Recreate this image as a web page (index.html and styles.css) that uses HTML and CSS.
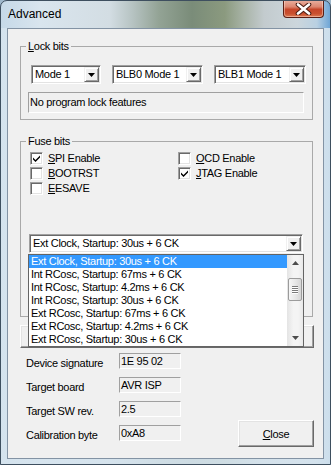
FILE: index.html
```html
<!DOCTYPE html>
<html>
<head>
<meta charset="utf-8">
<link rel="stylesheet" href="styles.css">
</head>
<body>
<div class="window">
  <div class="titlebar">
    <span class="title">Advanced</span>
    <div class="close-x">
      <svg width="17" height="12" viewBox="0 0 17 12">
        <path d="M3 1.5 L14 10.5 M14 1.5 L3 10.5" stroke="#4a1c12" stroke-width="4.6" stroke-linecap="round" fill="none"/>
        <path d="M3 1.5 L14 10.5 M14 1.5 L3 10.5" stroke="#ffffff" stroke-width="2.6" stroke-linecap="round" fill="none"/>
      </svg>
    </div>
  </div>
  <div class="client">
    <fieldset class="group lock">
      <legend><u>L</u>ock bits</legend>
      <div class="combo-row">
        <div class="combo c1"><span class="combo-text">Mode 1</span><span class="combo-btn"><svg width="7" height="4" viewBox="0 0 7 4"><path d="M0 0H7L3.5 4Z" fill="#000"/></svg></span></div>
        <div class="combo c2"><span class="combo-text">BLB0 Mode 1</span><span class="combo-btn"><svg width="7" height="4" viewBox="0 0 7 4"><path d="M0 0H7L3.5 4Z" fill="#000"/></svg></span></div>
        <div class="combo c3"><span class="combo-text">BLB1 Mode 1</span><span class="combo-btn"><svg width="7" height="4" viewBox="0 0 7 4"><path d="M0 0H7L3.5 4Z" fill="#000"/></svg></span></div>
      </div>
      <div class="status">No program lock features</div>
    </fieldset>

    <fieldset class="group fuse">
      <legend>Fuse bits</legend>
      <div class="checks">
        <div class="chk"><span class="box"><svg width="7" height="7" viewBox="0 0 7 7"><path d="M0 2.5L2.5 5L7 0.5V2.5L2.5 7L0 4.5Z" fill="#000"/></svg></span><span><u>S</u>PI Enable</span></div>
        <div class="chk"><span class="box"></span><span><u>O</u>CD Enable</span></div>
        <div class="chk"><span class="box"></span><span><u>B</u>OOTRST</span></div>
        <div class="chk"><span class="box"><svg width="7" height="7" viewBox="0 0 7 7"><path d="M0 2.5L2.5 5L7 0.5V2.5L2.5 7L0 4.5Z" fill="#000"/></svg></span><span><u>J</u>TAG Enable</span></div>
        <div class="chk"><span class="box"></span><span><u>E</u>ESAVE</span></div>
      </div>
      <div class="combo-wrap">
        <div class="combo wide"><span class="combo-text">Ext Clock, Startup: 30us + 6 CK</span><span class="combo-btn"><svg width="7" height="4" viewBox="0 0 7 4"><path d="M0 0H7L3.5 4Z" fill="#000"/></svg></span></div>
        <div class="droplist">
          <div class="items">
            <div class="item sel">Ext Clock, Startup: 30us + 6 CK</div>
            <div class="item">Int RCosc, Startup: 67ms + 6 CK</div>
            <div class="item">Int RCosc, Startup: 4.2ms + 6 CK</div>
            <div class="item">Int RCosc, Startup: 30us + 6 CK</div>
            <div class="item">Ext RCosc, Startup: 67ms + 6 CK</div>
            <div class="item">Ext RCosc, Startup: 4.2ms + 6 CK</div>
            <div class="item">Ext RCosc, Startup: 30us + 6 CK</div>
          </div>
          <div class="scrollbar">
            <div class="sb-arrow"><svg width="7" height="4" viewBox="0 0 7 4"><path d="M0 4H7L3.5 0Z" fill="#4d4d4d"/></svg></div>
            <div class="sb-track-top"></div>
            <div class="sb-thumb"><span></span><span></span><span></span><span></span></div>
            <div class="sb-track"></div>
            <div class="sb-arrow"><svg width="7" height="4" viewBox="0 0 7 4"><path d="M0 0H7L3.5 4Z" fill="#4d4d4d"/></svg></div>
          </div>
        </div>
      </div>
    </fieldset>

    <div class="btn hidden-btn"></div>

    <div class="info">
      <div class="info-grid">
        <span class="lbl">Device signature</span><span class="field">1E 95 02</span>
        <span class="lbl">Target board</span><span class="field">AVR ISP</span>
        <span class="lbl">Target SW rev.</span><span class="field">2.5</span>
        <span class="lbl">Calibration byte</span><span class="field">0xA8</span>
      </div>
      <div class="btn close-btn"><span><u>C</u>lose</span></div>
    </div>
  </div>
</div>
</body>
</html>
```

FILE: styles.css
```css
html, body {
  margin: 0;
  padding: 0;
  background: #9fb8cc;
}

body {
  font-family: "Liberation Sans", Arial, sans-serif;
  font-size: 11px;
  letter-spacing: -0.3px;
  color: #000;
}

.window {
  width: 331px;
  height: 465px;
  box-sizing: border-box;
  border: 1px solid #3e4f5f;
  border-radius: 7px 7px 0 0;
  overflow: hidden;
  background:
    linear-gradient(to bottom, rgba(255,255,255,0) 0, rgba(255,255,255,0) 27px, rgba(214,228,238,0.9) 27px),
    linear-gradient(to right, #c6d9e8 0%, #d9e5ee 12%, #d3dde3 33%, #b6c3c2 40%, #93a395 48%, #7a8c79 58%, #8b9a7f 68%, #a9b4a8 74%, #c3cbce 80%, #ccd6dc 90%, #b9d0e2 96%, #6fa6d6 100%);
  display: flex;
  flex-direction: column;
}

.titlebar {
  height: 27px;
  flex: none;
  display: flex;
  justify-content: space-between;
  align-items: flex-start;
  padding: 0 6px 0 7px;
}

.title {
  font-size: 12px;
  letter-spacing: 0;
  line-height: 14px;
  margin-top: 6px;
}

.close-x {
  width: 41px;
  height: 18px;
  margin-top: -1px;
  box-sizing: border-box;
  border: 1px solid #5a1e14;
  border-top: none;
  border-radius: 0 0 4px 4px;
  background: linear-gradient(to bottom, #eab2a2 0%, #dc8670 40%, #c6462a 55%, #c9502f 80%, #dc7a52 100%);
  box-shadow: inset 0 0 0 1px rgba(255,230,220,0.45);
  display: flex;
  align-items: center;
  justify-content: center;
}

.client {
  margin: 0 6px;
  height: 431px;
  box-sizing: border-box;
  border: 1px solid #8393a4;
  background: #f0f0f0;
}

/* group boxes */
.group {
  box-sizing: border-box;
  width: 293px;
  margin: 0 0 0 12px;
  border: 1px solid #a9a9a9;
  border-radius: 0;
  padding: 0;
  min-width: 0;
}

.group legend {
  padding: 0 2px;
  margin-left: 5px;
  line-height: 13px;
  font-size: 11px;
}

.lock {
  margin-top: 11px;
  padding: 12px 0 6px 0;
}

.fuse {
  margin-top: 15px;
  padding: 3px 0 63px 0;
}

/* combos */
.combo-row {
  display: flex;
  gap: 11px;
  margin-left: 10px;
}

.combo {
  box-sizing: border-box;
  height: 19px;
  display: flex;
  align-items: stretch;
  background: #fff;
  border: 1px solid;
  border-color: #a0a0a0 #ffffff #ffffff #a0a0a0;
  box-shadow: inset 1px 1px 0 #696969, inset -1px -1px 0 #e3e3e3;
  padding: 1px;
}

.c1 { width: 70px; }
.c2 { width: 91px; }
.c3 { width: 92px; }

.combo-text {
  flex: 1;
  padding-left: 2px;
  line-height: 15px;
  white-space: nowrap;
  overflow: hidden;
}

.combo-btn {
  width: 15px;
  height: 15px;
  box-sizing: border-box;
  background: #f0f0f0;
  border: 1px solid;
  border-color: #f0f0f0 #696969 #696969 #f0f0f0;
  box-shadow: inset 1px 1px 0 #ffffff, inset -1px -1px 0 #a0a0a0;
  display: flex;
  align-items: center;
  justify-content: center;
}

.status {
  box-sizing: border-box;
  width: 276px;
  height: 21px;
  margin: 8px 0 0 7px;
  border: 1px solid;
  border-color: #a0a0a0 #ffffff #ffffff #a0a0a0;
  line-height: 19px;
  padding-left: 1px;
}

/* checkboxes */
.checks {
  display: grid;
  grid-template-columns: 148px auto;
  grid-auto-rows: 15px;
  margin-left: 9px;
}

.chk {
  display: flex;
  align-items: center;
  gap: 5px;
  line-height: 13px;
}

.box {
  width: 13px;
  height: 13px;
  box-sizing: border-box;
  background: #fff;
  border: 1px solid;
  border-color: #a0a0a0 #ffffff #ffffff #a0a0a0;
  box-shadow: inset 1px 1px 0 #696969, inset -1px -1px 0 #e3e3e3;
  display: flex;
  align-items: center;
  justify-content: center;
}

.combo-wrap {
  position: relative;
  margin: 38px 0 0 8px;
  width: 274px;
}

.wide {
  width: 274px;
}

/* dropdown list */
.droplist {
  position: absolute;
  top: 20px;
  left: -1px;
  width: 276px;
  height: 93px;
  box-sizing: border-box;
  background: #fff;
  border: 1px solid #646464;
  display: flex;
  z-index: 2;
}

.items {
  width: 258px;
}

.item {
  height: 13px;
  line-height: 13px;
  padding-left: 2px;
  white-space: nowrap;
}

.item.sel {
  background: #3399ff;
  color: #fff;
}

.scrollbar {
  width: 16px;
  display: flex;
  flex-direction: column;
  background: linear-gradient(to right, #e4e4e4, #f4f4f4 40%, #f4f4f4 70%, #e8e8e8);
}

.sb-arrow {
  height: 16px;
  display: flex;
  align-items: center;
  justify-content: center;
}

.sb-track-top {
  height: 7px;
}

.sb-thumb {
  height: 23px;
  margin: 0 1px;
  box-sizing: border-box;
  border: 1px solid #9b9b9b;
  border-radius: 2px;
  background: linear-gradient(to right, #f6f6f6, #e8e8e8 50%, #d6d6d6);
  display: flex;
  flex-direction: column;
  align-items: center;
  justify-content: center;
  gap: 1px;
}

.sb-thumb span {
  width: 6px;
  height: 1px;
  background: #7a7a7a;
  box-shadow: 0 1px 0 #fff;
}

.sb-track {
  flex: 1;
}

/* buttons */
.btn {
  box-sizing: border-box;
  background: #f0f0f0;
  border: 1px solid;
  border-color: #ffffff #696969 #696969 #ffffff;
  box-shadow: inset -1px -1px 0 #a0a0a0, inset 1px 1px 0 #e3e3e3;
}

.hidden-btn {
  width: 294px;
  height: 23px;
  margin: 8px 0 0 12px;
}

.info {
  display: flex;
  align-items: flex-start;
  margin-top: 5px;
}

.info-grid {
  display: grid;
  grid-template-columns: 93px 62px;
  grid-auto-rows: 16px;
  row-gap: 8px;
  margin-left: 18px;
  align-items: center;
}

.lbl {
  line-height: 13px;
  padding-top: 4px;
}

.field {
  box-sizing: border-box;
  height: 16px;
  border: 1px solid;
  border-color: #a0a0a0 #ffffff #ffffff #a0a0a0;
  line-height: 14px;
  padding-left: 1px;
}

.close-btn {
  width: 76px;
  height: 27px;
  margin: 67px 0 0 auto;
  margin-right: 9px;
  display: flex;
  align-items: center;
  justify-content: center;
}
```
